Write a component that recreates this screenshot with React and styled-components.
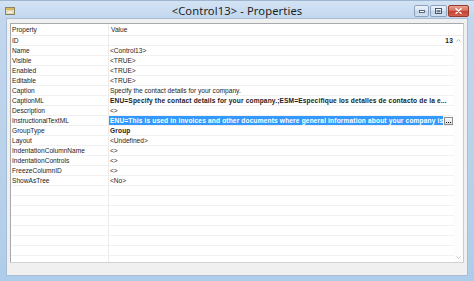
import React from "react";
import styled, { createGlobalStyle } from "styled-components";

const Global = createGlobalStyle`
  html, body { margin: 0; padding: 0; background: #b8d0ea; }
  body { width: 474px; height: 281px; overflow: hidden; }
  #root { width: 474px; height: 281px; }
`;

const Window = styled.div`
  width: 474px;
  height: 281px;
  box-sizing: border-box;
  display: flex;
  flex-direction: column;
  background: linear-gradient(180deg, #d3e3f4 0px, #c2d7ee 17px, #b9d1ea 60%, #aecdea 100%);
  border-top: 1px solid #9fb6d0;
  overflow: hidden;
`;

const TitleBar = styled.div`
  height: 17px;
  flex: none;
  display: grid;
  grid-template-columns: 1fr auto 1fr;
  align-items: center;
  padding: 0 5px 0 5px;
`;

const TitleIcon = styled.div`
  display: flex;
  align-items: center;
  justify-self: start;
  padding-top: 2px;
`;

const TitleText = styled.div`
  font-family: "Noto Sans", "Open Sans", sans-serif;
  font-size: 11.2px;
  color: #1e1e1e;
  padding-top: 2px;
  letter-spacing: 0.1px;
`;

const Buttons = styled.div`
  justify-self: end;
  align-self: start;
  display: flex;
  gap: 1px;
  margin-top: 4px;
`;

const CapButton = styled.div`
  width: ${(p) => p.$w}px;
  height: 12px;
  box-sizing: border-box;
  border: 1px solid ${(p) => (p.$close ? "#9a3a2c" : "#8ea3bb")};
  border-radius: 2px;
  background: ${(p) =>
    p.$close
      ? "linear-gradient(180deg, #e9a595 0%, #d3705e 45%, #c4422f 55%, #d0624d 100%)"
      : "linear-gradient(180deg, #edf3fa 0%, #d7e4f2 45%, #c3d5ea 55%, #d3e2f2 100%)"};
  display: flex;
  align-items: center;
  justify-content: center;
`;

const Client = styled.div`
  flex: 1;
  margin: 0 6px 5px 6px;
  background: #f0f0f0;
  border: 1px solid #a9bdd4;
  box-sizing: border-box;
  padding: 4px 3px 12px 3px;
  display: flex;
  min-height: 0;
  min-width: 0;
`;

const GridBox = styled.div`
  flex: 1;
  min-width: 0;
  background: #ffffff;
  border: 1px solid #a7a9ad;
  border-right-color: #c9cbcf;
  border-bottom-color: #d0d2d6;
  display: flex;
  flex-direction: column;
  min-height: 0;
  font-family: "Liberation Sans", Arial, sans-serif;
  font-size: 6.6px;
  color: #1c1c1c;
`;

const HeaderRow = styled.div`
  height: 12px;
  flex: none;
  box-sizing: border-box;
  display: flex;
  border-bottom: 1px solid #ececec;
  line-height: 11px;
`;

const HeaderCell = styled.div`
  width: ${(p) => (p.$w ? p.$w + "px" : "auto")};
  flex: ${(p) => (p.$w ? "none" : "1")};
  padding-left: ${(p) => (p.$w ? "1px" : "2px")};
  box-sizing: border-box;
  border-right: ${(p) => (p.$w ? "1px solid #efefef" : "none")};
`;

const Body = styled.div`
  flex: 1;
  display: flex;
  min-height: 0;
  min-width: 0;
`;

const Rows = styled.div`
  flex: 1;
  min-width: 0;
  overflow: hidden;
  display: flex;
  flex-direction: column;
`;

const Row = styled.div`
  height: 10px;
  flex: none;
  min-width: 0;
  box-sizing: border-box;
  display: flex;
  border-bottom: 1px solid #f1f1f1;
  line-height: 9px;
`;

const PropCell = styled.div`
  width: 98px;
  flex: none;
  box-sizing: border-box;
  padding-left: 1px;
  border-right: 1px solid #eaeaea;
  white-space: nowrap;
  overflow: hidden;
`;

const ValueCell = styled.div`
  flex: 1;
  min-width: 0;
  display: flex;
  align-items: center;
  justify-content: ${(p) => (p.$right ? "flex-end" : "flex-start")};
  padding: 0 ${(p) => (p.$right ? "1px" : "0")} 0 ${(p) => (p.$selected ? "0" : "1px")};
  white-space: nowrap;
  overflow: hidden;
  font-weight: ${(p) => (p.$bold ? 700 : 400)};
  letter-spacing: ${(p) => (p.$bold ? "0.15px" : "0")};
`;

const Selection = styled.div`
  flex: 1;
  min-width: 0;
  height: 9px;
  overflow: hidden;
  background: #3399ff;
  color: #ffffff;
  padding-left: 1px;
  margin-right: 1px;
`;

const DotsButton = styled.div`
  width: 9px;
  height: 8px;
  flex: none;
  box-sizing: border-box;
  border: 1px solid #8d8d8d;
  background: linear-gradient(180deg, #fafafa, #dedede);
  display: flex;
  align-items: flex-end;
  justify-content: center;
  gap: 1px;
  padding-bottom: 1px;
  margin-right: 1px;
`;

const Dot = styled.span`
  width: 1px;
  height: 1px;
  background: #111;
`;

const Scrollbar = styled.div`
  width: 9px;
  flex: none;
  background: #fcfcfc;
  display: flex;
  flex-direction: column;
  justify-content: space-between;
  align-items: center;
  padding: 3px 0 3px 0;
  box-sizing: border-box;
`;

const Chevron = ({ down }) => (
  <svg width="5" height="3" viewBox="0 0 5 3">
    <path
      d={down ? "M0.5 0.5 L2.5 2.5 L4.5 0.5" : "M0.5 2.5 L2.5 0.5 L4.5 2.5"}
      fill="none"
      stroke="#c4c4c4"
      strokeWidth="1"
    />
  </svg>
);

const rows = [
  { name: "ID", value: "13", bold: true, right: true },
  { name: "Name", value: "<Control13>" },
  { name: "Visible", value: "<TRUE>" },
  { name: "Enabled", value: "<TRUE>" },
  { name: "Editable", value: "<TRUE>" },
  { name: "Caption", value: "Specify the contact details for your company." },
  {
    name: "CaptionML",
    value:
      "ENU=Specify the contact details for your company.;ESM=Especifique los detalles de contacto de la e...",
    bold: true,
  },
  { name: "Description", value: "<>" },
  {
    name: "InstructionalTextML",
    value:
      "ENU=This is used in invoices and other documents where general information about your company is printed.",
    bold: true,
    selected: true,
  },
  { name: "GroupType", value: "Group", bold: true },
  { name: "Layout", value: "<Undefined>" },
  { name: "IndentationColumnName", value: "<>" },
  { name: "IndentationControls", value: "<>" },
  { name: "FreezeColumnID", value: "<>" },
  { name: "ShowAsTree", value: "<No>" },
];

const empty = Array.from({ length: 10 });

export default function App() {
  return (
    <>
      <Global />
      <Window>
        <TitleBar>
          <TitleIcon>
            <svg width="10" height="8" viewBox="0 0 10 8">
              <rect x="0.5" y="0.5" width="9" height="7" fill="#efe6c4" stroke="#8c8466" />
              <rect x="1" y="1" width="8" height="2" fill="#d9b95a" />
              <rect x="2" y="4" width="6" height="2.5" fill="#fbf8ec" stroke="#b9ae86" strokeWidth="0.5" />
            </svg>
          </TitleIcon>
          <TitleText>{"<Control13> - Properties"}</TitleText>
          <Buttons>
            <CapButton $w={15}>
              <svg width="6" height="3" viewBox="0 0 6 3">
                <rect x="0.5" y="0.5" width="5" height="2" fill="#ffffff" stroke="#3a4b60" strokeWidth="0.8" />
              </svg>
            </CapButton>
            <CapButton $w={17}>
              <svg width="7" height="6" viewBox="0 0 7 6">
                <rect x="0.5" y="0.5" width="6" height="5" fill="#ffffff" stroke="#3a4b60" strokeWidth="0.9" />
                <rect x="1.5" y="2" width="4" height="2.5" fill="#6f8299" />
              </svg>
            </CapButton>
            <CapButton $w={21} $close>
              <svg width="7" height="6" viewBox="0 0 7 6">
                <path d="M1 0.8 L6 5.2 M6 0.8 L1 5.2" stroke="#ffffff" strokeWidth="1.5" strokeLinecap="round" />
              </svg>
            </CapButton>
          </Buttons>
        </TitleBar>
        <Client>
          <GridBox>
            <HeaderRow>
              <HeaderCell $w={98}>Property</HeaderCell>
              <HeaderCell>Value</HeaderCell>
            </HeaderRow>
            <Body>
              <Rows>
                {rows.map((r) => (
                  <Row key={r.name}>
                    <PropCell>{r.name}</PropCell>
                    <ValueCell $bold={r.bold} $right={r.right} $selected={r.selected}>
                      {r.selected ? (
                        <>
                          <Selection>{r.value}</Selection>
                          <DotsButton aria-label="...">
                            <Dot />
                            <Dot />
                            <Dot />
                          </DotsButton>
                        </>
                      ) : (
                        r.value
                      )}
                    </ValueCell>
                  </Row>
                ))}
                {empty.map((_, i) => (
                  <Row key={"e" + i}>
                    <PropCell />
                    <ValueCell />
                  </Row>
                ))}
              </Rows>
              <Scrollbar>
                <Chevron />
                <Chevron down />
              </Scrollbar>
            </Body>
          </GridBox>
        </Client>
      </Window>
    </>
  );
}
